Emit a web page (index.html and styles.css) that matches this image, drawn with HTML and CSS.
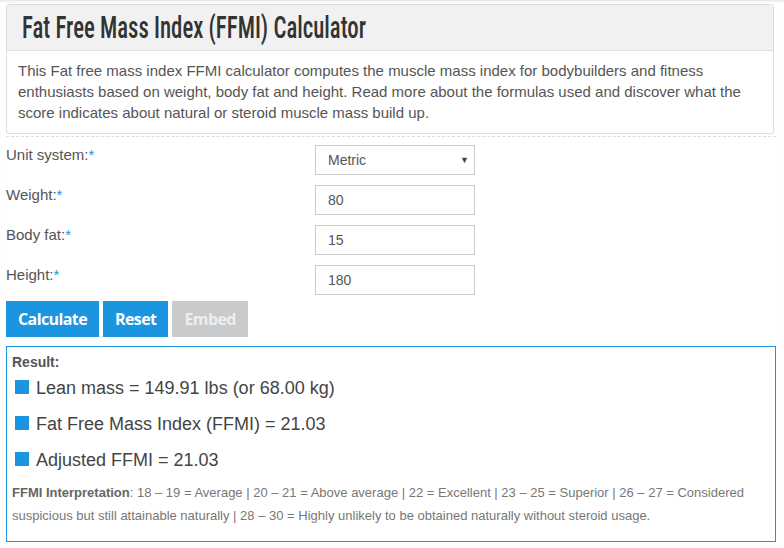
FILE: index.html
```html
<!DOCTYPE html>
<html>
<head>
<meta charset="utf-8">
<link rel="stylesheet" href="styles.css">
</head>
<body>
<div class="page">
  <div class="panel">
    <div class="panel-head"><h1>Fat Free Mass Index (FFMI) Calculator</h1></div>
    <div class="panel-body">This Fat free mass index FFMI calculator computes the muscle mass index for bodybuilders and fitness enthusiasts based on weight, body fat and height. Read more about the formulas used and discover what the score indicates about natural or steroid muscle mass build up.</div>
  </div>
  <div class="sep"></div>
  <div class="form">
    <div class="row"><label>Unit system:<span class="req">*</span></label><div class="field select"><span>Metric</span><span class="arrow">&#9660;</span></div></div>
    <div class="row"><label>Weight:<span class="req">*</span></label><div class="field">80</div></div>
    <div class="row"><label>Body fat:<span class="req">*</span></label><div class="field">15</div></div>
    <div class="row"><label>Height:<span class="req">*</span></label><div class="field">180</div></div>
  </div>
  <div class="buttons">
    <div class="btn">Calculate</div>
    <div class="btn">Reset</div>
    <div class="btn grey">Embed</div>
  </div>
  <div class="result">
    <div class="res-title">Result:</div>
    <div class="res-line"><span class="sq"></span>Lean mass = 149.91 lbs (or 68.00 kg)</div>
    <div class="res-line"><span class="sq"></span>Fat Free Mass Index (FFMI) = 21.03</div>
    <div class="res-line"><span class="sq"></span>Adjusted FFMI = 21.03</div>
    <div class="interp"><b>FFMI Interpretation</b>: 18 – 19 = Average | 20 – 21 = Above average | 22 = Excellent | 23 – 25 = Superior | 26 – 27 = Considered suspicious but still attainable naturally | 28 – 30 = Highly unlikely to be obtained naturally without steroid usage.</div>
  </div>
</div>
</body>
</html>
```
FILE: styles.css
```css
html, body { margin: 0; padding: 0; background: #fff; }
body { font-family: "Liberation Sans", Arial, sans-serif; color: #555; }
.page { padding: 4px 8px 0 6px; box-shadow: inset 0 3px 3px -2px #ddd; }
.panel { border: 1px solid #ddd; border-radius: 3px; width: 768px; box-sizing: border-box; }
.panel-head { background: #f1f1f1; border-bottom: 1px solid #ddd; height: 45px; padding: 0 15px; display: flex; align-items: center; border-radius: 3px 3px 0 0; overflow: hidden; }
h1 { margin: 0; font-family: "Roboto Condensed", Roboto, sans-serif; font-weight: 500; font-size: 31px; color: #333; display: inline-block; white-space: nowrap; transform: scaleX(0.735); transform-origin: left center; }
.panel-body { padding: 9px 11px 10px 11px; font-size: 15px; line-height: 21px; color: #555; }
.sep { border-top: 1px dashed #ddd; margin-top: 2px; width: 770px; }
.form { padding-top: 8px; }
.row { display: flex; height: 30px; margin-bottom: 10px; }
.row label { width: 309px; font-size: 15px; color: #555; padding-top: 1px; }
.req { color: #1b95e0; }
.field { width: 160px; height: 30px; box-sizing: border-box; border: 1px solid #ccc; font-size: 14px; color: #555; padding: 0 12px; display: flex; align-items: center; }
.select { justify-content: space-between; padding-right: 5px; }
.arrow { font-size: 9px; color: #444; }
.buttons { display: flex; gap: 4px; margin-top: -4px; }
.btn { background: #1b95e0; color: #fff; font-family: "Open Sans", sans-serif; font-weight: 700; font-size: 16px; height: 36px; padding: 0 12px; display: flex; align-items: center; letter-spacing: -0.6px; }
.grey { background: #c9cacc; color: #eee; }
.result { margin-top: 9px; border: 1px solid #1b95e0; width: 770px; box-sizing: border-box; padding: 7px 5px 14px 5px; }
.res-title { font-weight: bold; font-size: 14px; color: #555; margin-bottom: 6px; }
.res-line { font-size: 18px; color: #444; height: 36px; line-height: 24px; display: flex; align-items: flex-start; }
.sq { width: 14px; height: 14px; background: #1b95e0; margin: 4px 7px 0 3px; flex: none; }
.interp { font-size: 13px; line-height: 23px; color: #777; margin-top: -3px; }
.interp b { color: #666; }
```
